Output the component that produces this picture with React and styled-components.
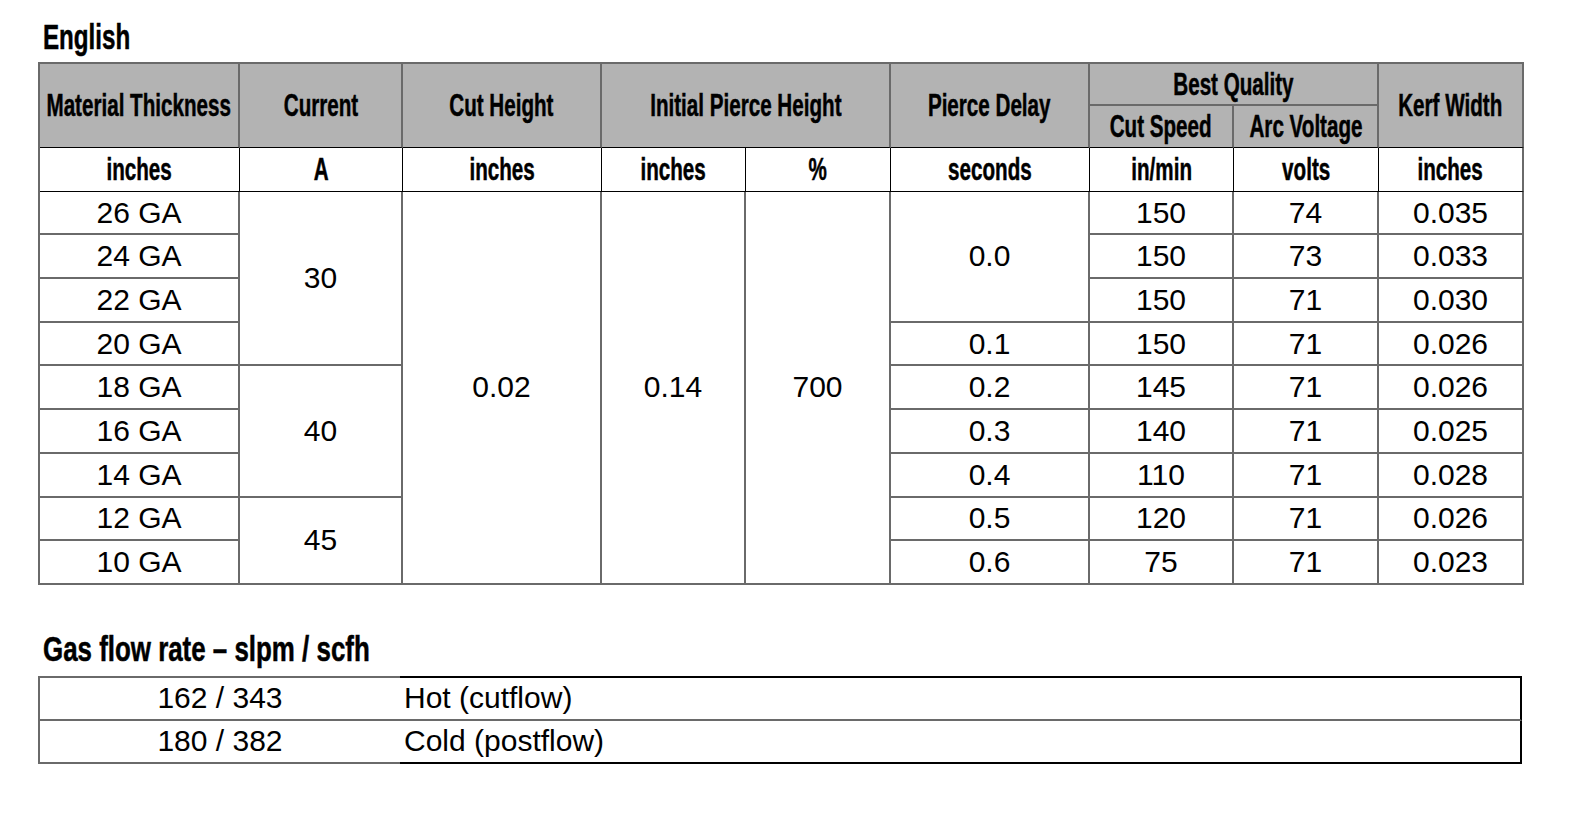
import React from "react";
import styled, { createGlobalStyle } from "styled-components";

const GlobalStyle = createGlobalStyle`
    html, body {
        margin: 0;
        padding: 0;
        background: #ffffff;
    }
    body {
        font-family: "Liberation Sans", Arial, sans-serif;
        color: #000;
    }
`;

const GRIS = "#6a6a6a";
const ENTETE = "#b3b3b3";

// police étroite : Liberation Sans gras compressé horizontalement
const Etroit = styled.span`
    display: inline-block;
    white-space: nowrap;
    font-family: "Liberation Sans", Arial, sans-serif;
    font-weight: bold;
    font-size: ${(p) => p.taille || 31}px;
    line-height: 1;
    -webkit-text-stroke: 0.5px #000;
    transform: scaleX(${(p) => p.echelle || 0.665});
    transform-origin: ${(p) => (p.gauche ? "left center" : "center")};
`;

const Centre = styled.div`
    display: flex;
    justify-content: center;
    align-items: center;
`;

const Page = styled.div`
    padding: 0 0 0 38px;
    width: 1484px;
`;

const Titre = styled.h2`
    margin: 0;
    padding-left: 5px;
    height: ${(p) => p.hauteur}px;
    display: flex;
    align-items: flex-end;
    padding-bottom: ${(p) => p.bas}px;
    box-sizing: border-box;
    font-weight: normal;
`;

const Tableau = styled.table`
    width: 1484px;
    table-layout: fixed;
    border-collapse: separate;
    border-spacing: 0;
    border-left: 2px solid ${GRIS};
    border-top: 2px solid ${GRIS};
`;

const Entete = styled.th`
    background: ${ENTETE};
    font-weight: normal;
    text-align: center;
    vertical-align: middle;
    padding: 0;
    border-right: 2px solid ${GRIS};
    border-bottom: ${(p) => (p.noir ? "1px solid #000" : `2px solid ${GRIS}`)};
`;

const Unite = styled.td`
    text-align: center;
    vertical-align: middle;
    padding: 0;
    border-right: ${(p) => (p.dernier ? `2px solid ${GRIS}` : "1px solid #000")};
    border-bottom: 1px solid #000;
`;

const Cellule = styled.td`
    font-size: 30px;
    line-height: 1;
    text-align: center;
    vertical-align: middle;
    padding: 0;
    border-right: 2px solid ${GRIS};
    border-bottom: 2px solid ${GRIS};
`;

const LigneEntete = styled.tr`
    height: 42px;
`;

const Ligne = styled.tr`
    height: 43.7px;
`;

const Espace = styled.div`
    height: ${(p) => p.h}px;
`;

const TableauGaz = styled.table`
    width: 1484px;
    table-layout: fixed;
    border-collapse: separate;
    border-spacing: 0;
`;

const CelluleGaz = styled.td`
    font-size: 30px;
    line-height: 1;
    height: 41px;
    padding: 0 0 0 ${(p) => (p.texte ? "4px" : "0")};
    text-align: ${(p) => (p.texte ? "left" : "center")};
    vertical-align: middle;
    border-top: ${(p) => (p.premier ? (p.texte ? "2px solid #000" : `2px solid ${GRIS}`) : "none")};
    border-bottom: ${(p) =>
        p.dernier ? (p.texte ? "2px solid #000" : `2px solid ${GRIS}`) : `2px solid ${GRIS}`};
    border-left: ${(p) => (p.texte ? "none" : `2px solid ${GRIS}`)};
    border-right: ${(p) => (p.texte ? "2px solid #000" : "none")};
`;

const largeurs = [200, 163, 199, 144, 145, 199, 144, 145, 145];

const epaisseurs = ["26 GA", "24 GA", "22 GA", "20 GA", "18 GA", "16 GA", "14 GA", "12 GA", "10 GA"];
const vitesses = [150, 150, 150, 150, 145, 140, 110, 120, 75];
const tensions = [74, 73, 71, 71, 71, 71, 71, 71, 71];
const saignees = ["0.035", "0.033", "0.030", "0.026", "0.026", "0.025", "0.028", "0.026", "0.023"];
const unites = ["inches", "A", "inches", "inches", "%", "seconds", "in/min", "volts", "inches"];
const courants = { 0: ["30", 4], 4: ["40", 3], 7: ["45", 2] };
const delais = { 0: ["0.0", 3], 3: ["0.1", 1], 4: ["0.2", 1], 5: ["0.3", 1], 6: ["0.4", 1], 7: ["0.5", 1], 8: ["0.6", 1] };

const gaz = [
    ["162 / 343", "Hot (cutflow)"],
    ["180 / 382", "Cold (postflow)"]
];

const TexteEntete = ({ children }) => (
    <Centre>
        <Etroit>{children}</Etroit>
    </Centre>
);

const App = () => {
    return (
        <>
            <GlobalStyle />
            <Page>
                <Titre hauteur={62} bas={8}>
                    <Etroit gauche taille={35} echelle={0.69}>English</Etroit>
                </Titre>
                <Tableau>
                    <colgroup>
                        {largeurs.map((l, i) => (
                            <col key={i} style={{ width: l }} />
                        ))}
                    </colgroup>
                    <thead>
                        <LigneEntete>
                            <Entete rowSpan={2} noir>
                                <TexteEntete>Material Thickness</TexteEntete>
                            </Entete>
                            <Entete rowSpan={2} noir>
                                <TexteEntete>Current</TexteEntete>
                            </Entete>
                            <Entete rowSpan={2} noir>
                                <TexteEntete>Cut Height</TexteEntete>
                            </Entete>
                            <Entete rowSpan={2} colSpan={2} noir>
                                <TexteEntete>Initial Pierce Height</TexteEntete>
                            </Entete>
                            <Entete rowSpan={2} noir>
                                <TexteEntete>Pierce Delay</TexteEntete>
                            </Entete>
                            <Entete colSpan={2}>
                                <TexteEntete>Best Quality</TexteEntete>
                            </Entete>
                            <Entete rowSpan={2} noir>
                                <TexteEntete>Kerf Width</TexteEntete>
                            </Entete>
                        </LigneEntete>
                        <LigneEntete>
                            <Entete noir>
                                <TexteEntete>Cut Speed</TexteEntete>
                            </Entete>
                            <Entete noir>
                                <TexteEntete>Arc Voltage</TexteEntete>
                            </Entete>
                        </LigneEntete>
                    </thead>
                    <tbody>
                        <Ligne>
                            {unites.map((u, i) => (
                                <Unite key={i} dernier={i === unites.length - 1}>
                                    <TexteEntete>{u}</TexteEntete>
                                </Unite>
                            ))}
                        </Ligne>
                        {epaisseurs.map((e, i) => (
                            <Ligne key={e}>
                                <Cellule>{e}</Cellule>
                                {courants[i] && <Cellule rowSpan={courants[i][1]}>{courants[i][0]}</Cellule>}
                                {i === 0 && (
                                    <>
                                        <Cellule rowSpan={9}>0.02</Cellule>
                                        <Cellule rowSpan={9}>0.14</Cellule>
                                        <Cellule rowSpan={9}>700</Cellule>
                                    </>
                                )}
                                {delais[i] && <Cellule rowSpan={delais[i][1]}>{delais[i][0]}</Cellule>}
                                <Cellule>{vitesses[i]}</Cellule>
                                <Cellule>{tensions[i]}</Cellule>
                                <Cellule>{saignees[i]}</Cellule>
                            </Ligne>
                        ))}
                    </tbody>
                </Tableau>
                <Titre hauteur={91} bas={10}>
                    <Etroit gauche taille={35} echelle={0.74}>Gas flow rate – slpm / scfh</Etroit>
                </Titre>
                <TableauGaz>
                    <colgroup>
                        <col style={{ width: 362 }} />
                        <col />
                    </colgroup>
                    <tbody>
                        {gaz.map(([debit, libelle], i) => (
                            <tr key={debit}>
                                <CelluleGaz premier={i === 0} dernier={i === gaz.length - 1}>
                                    {debit}
                                </CelluleGaz>
                                <CelluleGaz texte premier={i === 0} dernier={i === gaz.length - 1}>
                                    {libelle}
                                </CelluleGaz>
                            </tr>
                        ))}
                    </tbody>
                </TableauGaz>
                <Espace h={40} />
            </Page>
        </>
    );
};

export default App;
